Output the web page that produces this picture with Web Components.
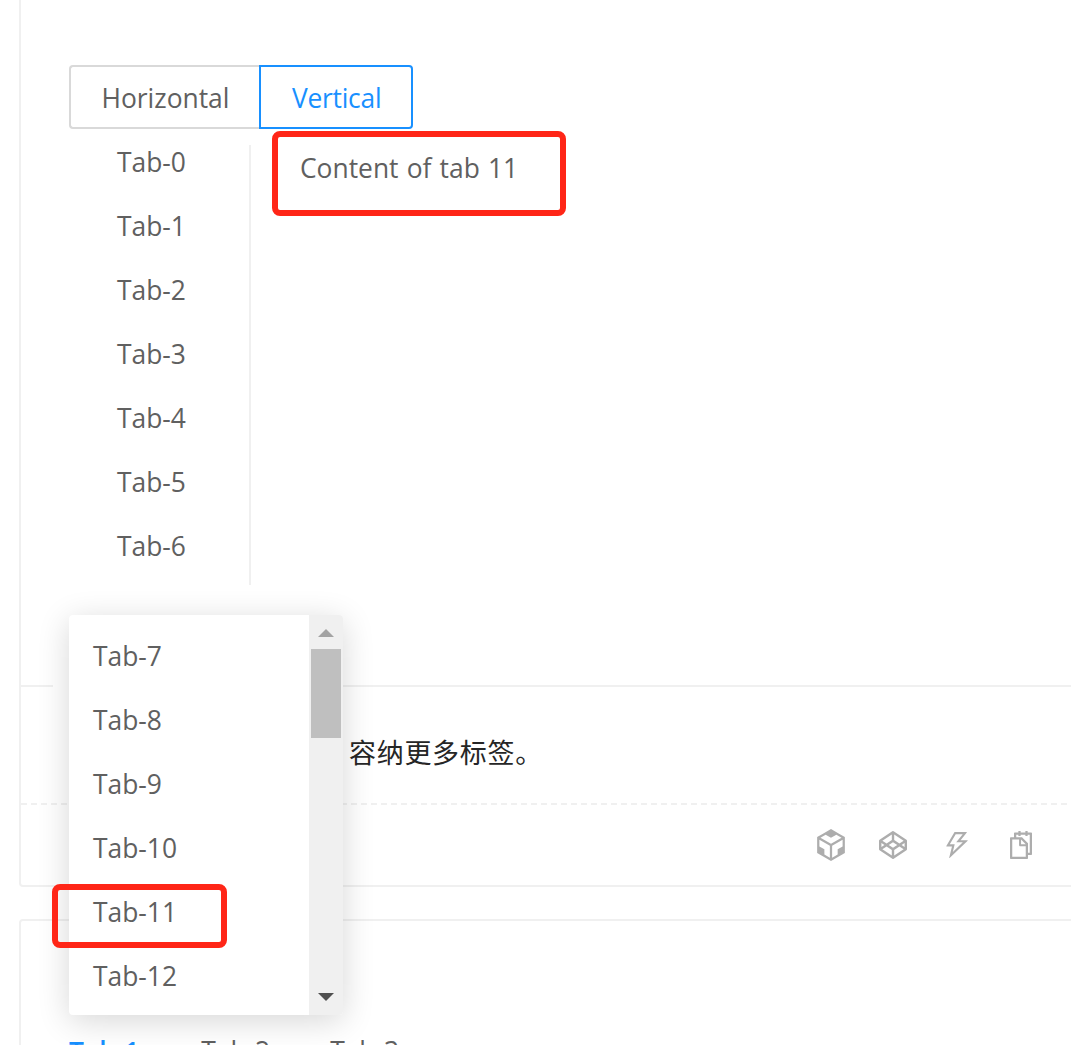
<!DOCTYPE html>
<html lang="zh"><head><meta charset="utf-8"><title>Tabs</title>
<style>
html,body{margin:0;padding:0;height:1045px;overflow:hidden;background:#fff}
body{font-family:"Open Sans","Noto Sans CJK SC",sans-serif;font-size:26px;color:#595959}
</style></head><body>
<demo-page>
  <code-card>
    <radio-group slot="demo"><radio-btn>Horizontal</radio-btn><radio-btn active>Vertical</radio-btn></radio-group>
    <v-tabs slot="demo"></v-tabs>
    <span slot="desc">容纳更多标签。</span>
    <red-mark style="left:251px;top:131px;width:294px;height:85px"></red-mark>
    <code-actions slot="actions"></code-actions>
  </code-card>
  <next-card></next-card>
  <tab-popup></tab-popup>
  <red-mark style="left:52px;top:884px;width:175px;height:64px"></red-mark>
</demo-page>
<script>
function def(name,html,init){customElements.define(name,class extends HTMLElement{constructor(){super();this.attachShadow({mode:'open'}).innerHTML=html;if(init)init(this)}})}
const TAB='font:26.4px/64px "Open Sans","Noto Sans CJK SC",sans-serif;color:#606060;';
def('demo-page',`<style>:host{display:block;position:relative;height:1045px;overflow:hidden;padding-left:19px;box-sizing:border-box}</style><slot></slot>`);
def('code-card',`<style>
:host{display:block;position:relative;width:1100px;border:2px solid #f0f0f0;border-top:0;border-radius:0 0 4px 4px;box-sizing:border-box}
.demo{padding:65px 0 100px 48px;border-bottom:2px solid #f0f0f0;position:relative}
.gap{position:absolute;left:32px;bottom:-2px;width:200px;height:2px;background:#fff}
.desc{height:118px;box-sizing:border-box;padding:47px 0 0 328px;font:27px/36px "Noto Sans CJK SC",sans-serif;letter-spacing:.7px;color:#262626;border-bottom:2px dashed #f0f0f0}
.act{height:80px}
</style><div class="demo"><slot name="demo"></slot><div class="gap"></div></div><div class="desc"><slot name="desc"></slot></div><div class="act"><slot name="actions"></slot></div><slot></slot>`);
def('radio-group',`<style>:host{display:flex;width:max-content}</style><slot></slot>`);
def('radio-btn',`<style>
:host{display:block;height:64px;box-sizing:border-box;border:2px solid #d9d9d9;padding:0 30.5px;${TAB}line-height:62px;background:#fff}
:host(:first-child){border-right:0;border-radius:4px 0 0 4px}
:host(:last-child){border-radius:0 4px 4px 0;margin-left:-1px;padding:0 30px 0 31px;letter-spacing:-.25px}
:host([active]){border-color:#1890ff;color:#1890ff}
</style><slot></slot>`);
def('v-tabs',`<style>
:host{display:flex;margin-top:16px;height:440px}
nav{width:182px;box-sizing:border-box;border-right:2px solid #f0f0f0;padding-left:48px;${TAB}}
.list{margin-top:-15px}
.c{padding:6px 0 0 49px;${TAB}line-height:34px;word-spacing:1.3px}
</style><nav><div class="list">${[0,1,2,3,4,5,6].map(i=>`<div>Tab-${i}</div>`).join('')}</div></nav><div class="c">Content of tab 11</div>`);
def('red-mark',`<style>:host{display:block;position:absolute;box-sizing:border-box;border:6px solid #ff2617;border-radius:8px;z-index:5;pointer-events:none}</style>`);
def('tab-popup',`<style>
:host{position:absolute;left:69px;top:615px;width:274px;height:400px;display:flex;background:#fff;border-radius:4px;overflow:hidden;box-shadow:0 6px 32px rgba(0,0,0,.16);z-index:3}
.l{flex:1;padding:9px 0 0 24px;${TAB}}
.s{width:34px;background:#f0f0f0;display:flex;flex-direction:column;align-items:center;position:relative}
.up{margin-top:14px;border:8px solid transparent;border-top:0;border-bottom:8px solid #a3a3a3}
.th{margin-top:12px;width:30px;height:89px;background:#bfbfbf}
.dn{margin-top:auto;margin-bottom:14px;border:8px solid transparent;border-bottom:0;border-top:8px solid #505050}
</style><div class="l">${[7,8,9,10,11,12].map(i=>`<div>Tab-${i}</div>`).join('')}</div><div class="s"><div class="up"></div><div class="th"></div><div class="dn"></div></div>`);
def('code-actions',`<style>
:host{display:flex;align-items:center;height:80px;padding-left:794px;color:#adadad}
svg{width:32px;height:32px;fill:currentColor;flex:none;display:block}
.cp{width:28px;height:28px;margin:0 36px 0 32px}
.th{margin-right:36px}
</style>
<svg viewBox="0 0 1024 1024"><path d="M755 140.3l.5-.3h.3L512 0 268.3 140h-.3l.8.4L68.6 256v512L512 1024l443.4-256V256L755 140.3zm-30 506.4v171.2L548 920.1V534.7L883.4 341v215.7l-158.4 90zm-584.4-90.6V340.8L476 534.4v385.7L300 818.5V646.7l-159.4-90.6zM511.7 280l171.1-98.3 166.3 96-336.9 194.5-337-194.6 165.7-95.7L511.7 280z"/></svg>
<svg class="cp" viewBox="0 0 1024 1024"><path d="M123.4 668l344.6 229.7V692.6L277.1 565.1 123.4 668zM88 585.7L198.3 512 88 438.3v147.4zM556 897.7L900.6 668 746.9 565.1 556 692.6v205.1zM512 616.6L667.4 512.6 512 408.6 356.6 512.6 512 616.6zM277.7 459.4L468.6 332V126.9L123.4 356.6l154.3 102.8zM825.7 512L936 585.7V438.3L825.7 512zM746.9 459.4L900.6 356.6 556 126.9V332l190.9 127.4zM1024 356.6v310.9q0 23.4-19.4 36.5L538.3 1014.9q-12 7.4-24.6 7.4t-24.6-7.4L19.4 704.6Q0 691.4 0 668V356.6q0-23.4 19.4-36.6L485.7 9.1q12-7.4 24.6-7.4t24.6 7.4L1004.6 320q19.4 13.1 19.4 36.6z"/></svg>
<svg class="th" viewBox="64 64 896 896" style="width:28px"><path d="M848 359.3H627.7L825.8 109c4.1-5.3.4-13-6.3-13H436c-2.8 0-5.5 1.5-6.9 4L170 547.5c-3.1 5.3.7 12 6.9 12h174.4l-89.4 357.6c-1.9 7.8 7.5 13.3 13.3 7.7L853.5 373c5.2-4.9 1.7-13.7-5.5-13.7zM378.2 732.5l60.3-241H281.1l189.6-327.4h224.6L487 427.4h211L378.2 732.5z"/></svg>
<svg viewBox="64 64 896 896" style="width:28px"><path d="M832 112H724V72c0-4.4-3.6-8-8-8h-56c-4.4 0-8 3.6-8 8v40H500V72c0-4.4-3.6-8-8-8h-56c-4.4 0-8 3.6-8 8v40H320c-17.7 0-32 14.3-32 32v120h-96c-17.7 0-32 14.3-32 32v632c0 17.7 14.3 32 32 32h512c17.7 0 32-14.3 32-32v-96h96c17.7 0 32-14.3 32-32V144c0-17.7-14.3-32-32-32zM664 888H232V336h218v174c0 22.1 17.9 40 40 40h174v338zm0-402H514V336h.2L664 485.8v.2zm128 274h-56V456L544 264H360v-80h68v32c0 4.4 3.6 8 8 8h56c4.4 0 8-3.6 8-8v-32h152v32c0 4.4 3.6 8 8 8h56c4.4 0 8-3.6 8-8v-32h68v576z"/></svg>`);
def('next-card',`<style>
:host{display:block;width:1100px;margin-top:32px;border:2px solid #f0f0f0;border-radius:4px;box-sizing:border-box;padding:98px 0 0 48px;height:300px}
.r{display:flex;gap:60px;${TAB}}
b{color:#1890ff;font-weight:600;margin-right:2px}
</style><div class="r"><b>Tab-1</b><span>Tab-2</span><span>Tab-3</span></div>`);
</script>
</body></html>
